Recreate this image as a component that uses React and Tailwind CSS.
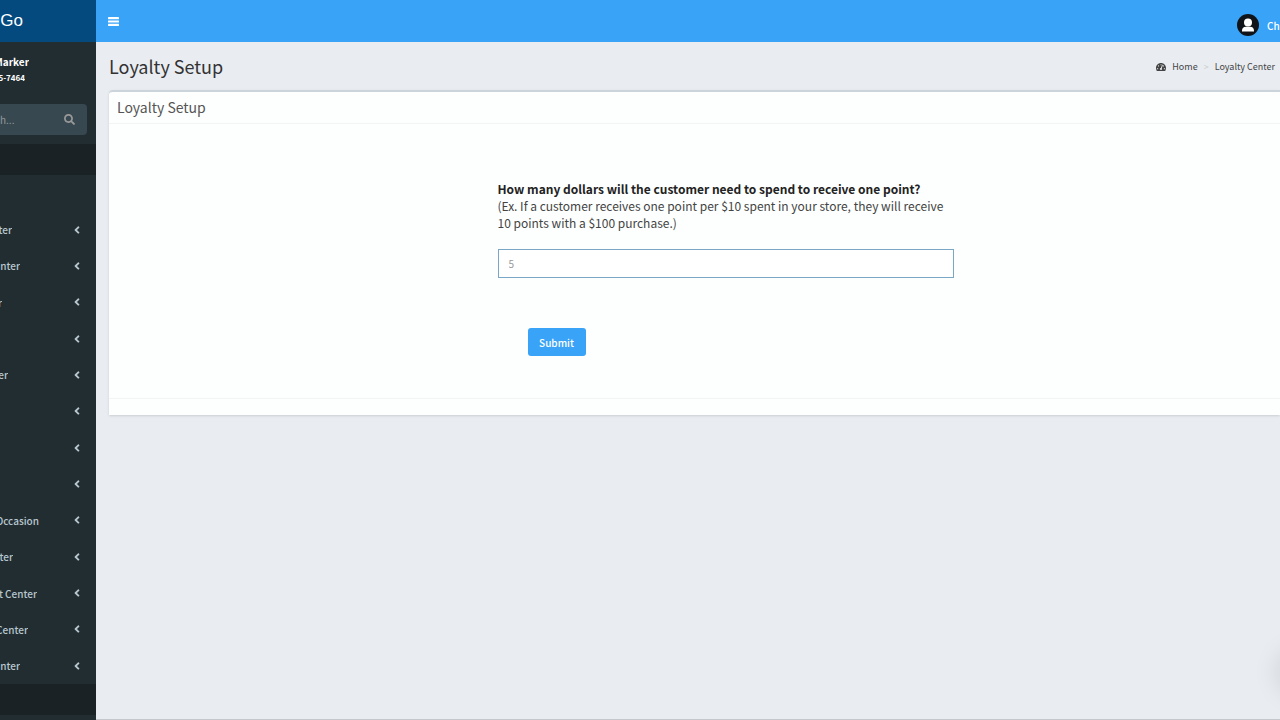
import { FaAngleLeft, FaSearch, FaTachometerAlt } from "react-icons/fa";

// room = how much of the label is still visible beside the scrolled edge
const menuItems = [
  { label: "", room: 0, arrow: false },
  { label: "ter", room: 12, arrow: true },
  { label: "nter", room: 20, arrow: true },
  { label: "r", room: 2, arrow: true },
  { label: "", room: 0, arrow: true },
  { label: "er", room: 8, arrow: true },
  { label: "", room: 0, arrow: true },
  { label: "", room: 0, arrow: true },
  { label: "", room: 0, arrow: true },
  { label: "Occasion", room: 39, arrow: true },
  { label: "ter", room: 13, arrow: true },
  { label: "t Center", room: 37, arrow: true },
  { label: "Center", room: 28, arrow: true },
  { label: "nter", room: 20, arrow: true },
];

const ClippedText = ({ room, children }) => (
  <span className="flex justify-end overflow-hidden" style={{ width: room }}>
    <span className="shrink-0 whitespace-nowrap">{children}</span>
  </span>
);

const Sidebar = () => (
  <aside className="w-24 shrink-0 bg-[#222d32] flex flex-col overflow-hidden">
    <div className="h-[42px] shrink-0 bg-[#044a7f] flex items-center text-white text-[17px] font-['Liberation_Sans',sans-serif]">
      <ClippedText room={23}>Go</ClippedText>
    </div>
    <div className="h-[62px] pt-3 text-white font-bold">
      <div className="text-[10px] leading-4">
        <ClippedText room={29}>Marker</ClippedText>
      </div>
      <div className="text-[8px] leading-4">
        <ClippedText room={25}>5-7464</ClippedText>
      </div>
    </div>
    <form className="h-10 pr-[9px]">
      <div className="h-[31px] rounded-r-sm bg-[#374850] flex items-center justify-between pr-3">
        <input
          type="text"
          aria-label="Search"
          placeholder="h..."
          className="w-12 h-full bg-transparent outline-none text-[10px] placeholder:text-[#93999c]"
        />
        <button type="button" aria-label="Search" className="text-[#999999]">
          <FaSearch size={11} />
        </button>
      </div>
    </form>
    <div className="h-[31px] shrink-0 bg-[#1a2226]"></div>
    <ul className="h-[509px] shrink-0 flex flex-col text-[#b8c7ce] text-[10px] font-medium">
      {menuItems.map((item, index) => (
        <li key={index} className="flex-1">
          <a
            href="#"
            className="h-full flex items-center justify-between pr-[13px]"
          >
            <ClippedText room={item.room}>{item.label}</ClippedText>
            {item.arrow && <FaAngleLeft size={12} />}
          </a>
        </li>
      ))}
    </ul>
    <div className="h-[31px] shrink-0 bg-[#1a2226]"></div>
  </aside>
);

const Navbar = () => (
  <nav className="h-[42px] bg-[#39a3f8] text-white flex items-center justify-between overflow-hidden">
    <button type="button" aria-label="Toggle navigation" className="pl-3">
      <svg viewBox="0 0 11 9" className="w-[11px] h-[9px]" fill="currentColor">
        <rect width="11" height="2.200" rx="0.400" />
        <rect y="3.400" width="11" height="2.200" rx="0.400" />
        <rect y="6.800" width="11" height="2.200" rx="0.400" />
      </svg>
    </button>
    <a
      href="#"
      className="pt-2 w-[43px] flex items-center gap-2 text-[10px] font-medium whitespace-nowrap"
    >
      <svg viewBox="0 0 22 22" className="w-[22px] h-[22px] shrink-0">
        <circle cx="11" cy="11" r="11" fill="#101418" />
        <circle cx="11" cy="8.500" r="4" fill="#fff" />
        <path
          d="M5 17.500v-1c0-2.300 1.600-3.800 3.800-3.800h4.400c2.200 0 3.800 1.500 3.800 3.800v1z"
          fill="#fff"
        />
      </svg>
      Ch
    </a>
  </nav>
);

const LoyaltyForm = () => (
  <form className="mx-auto w-[456px] pt-14 h-[274px]">
    <label htmlFor="dollars" className="block text-[12px] leading-[17px]">
      <strong className="block text-[#222222]">
        How many dollars will the customer need to spend to receive one point?
      </strong>
      (Ex. If a customer receives one point per $10 spent in your store, they
      will receive 10 points with a $100 purchase.)
    </label>
    <input
      id="dollars"
      type="text"
      placeholder="5"
      className="mt-[18px] w-full h-[29px] px-[10px] border border-[#7ba7c7] bg-white outline-none text-[10px] placeholder:text-[#999999]"
    />
    <button
      type="button"
      className="block mt-[50px] ml-[30px] w-[58px] h-7 rounded-[3px] bg-[#39a3f8] text-white text-[10px] font-medium"
    >
      Submit
    </button>
  </form>
);

const Content = () => (
  <main className="flex-1 pl-[13px]">
    <div className="h-12 pr-[5px] flex items-center justify-between">
      <h1 className="text-[18px] text-[#333333]">Loyalty Setup</h1>
      <ol className="pt-[2px] flex items-center text-[9px] text-[#444444]">
        <li>
          <a href="#" className="flex items-center gap-[6px]">
            <FaTachometerAlt size={10} />
            Home
          </a>
        </li>
        <li className="px-[6px] text-[#cccccc]">&gt;</li>
        <li>Loyalty Center</li>
      </ol>
    </div>
    <section className="border-t-2 border-[#cad4da] rounded-tl-sm bg-[#fdfffe] shadow-sm">
      <h2 className="h-8 pl-2 flex items-center border-b border-[#f4f4f4] text-[14px] text-[#555555]">
        Loyalty Setup
      </h2>
      <div className="pl-[62px]">
        <LoyaltyForm />
      </div>
      <div className="h-[17px] border-t border-[#f4f4f4]"></div>
    </section>
  </main>
);

const App = () => {
  return (
    <div className="relative min-h-screen flex overflow-hidden bg-[#222d32] text-[#444444] font-['Noto_Sans_CJK_SC',sans-serif]">
      <Sidebar />
      <div className="flex-1 flex flex-col bg-[#e9edf2] border-b border-[#c4c8cc]">
        <Navbar />
        <Content />
      </div>
      {/* soft shadow of the chat launcher past the right edge */}
      <div className="absolute -right-10 bottom-7 w-10 h-10 rounded-full shadow-[0_0_24px_4px_rgba(0,0,0,0.1)]"></div>
    </div>
  );
};

export default App;
